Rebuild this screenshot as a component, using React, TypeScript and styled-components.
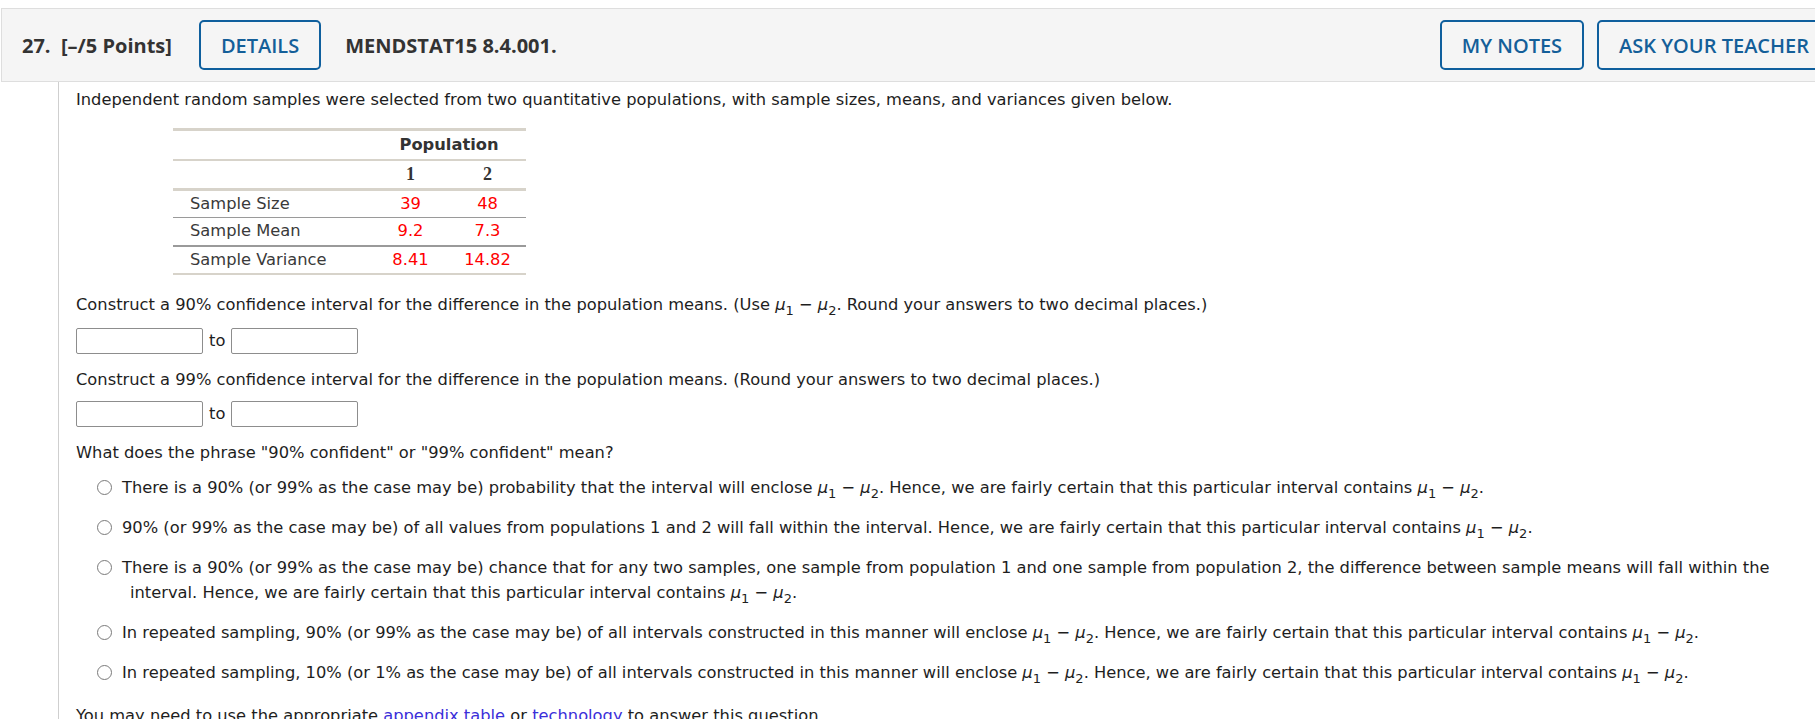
import React from 'react'
import styled, { createGlobalStyle } from 'styled-components'

const GlobalStyle = createGlobalStyle`
  html, body {
    margin: 0;
    padding: 0;
    background: #fff;
    overflow: hidden;
  }
`

const Page = styled.div`
  padding: 8px 0 0 1px;
  width: 1814px;
`

const Header = styled.header`
  display: flex;
  align-items: center;
  width: 1819px;
  height: 72px;
  padding-left: 20px;
  background: #f5f5f5;
  border: 1px solid #dedede;
  border-right: none;
  font-family: 'Open Sans', sans-serif;
  color: #333;
`

const Title = styled.span`
  font-size: 20px;
  font-weight: 700;
  white-space: pre;
  margin-right: 27px;
`

const OutlineButton = styled.button`
  flex-shrink: 0;
  height: 50px;
  padding: 0 20px;
  border: 2px solid #0f5f9d;
  border-radius: 5px;
  background: transparent;
  color: #145f99;
  font-family: 'Open Sans', sans-serif;
  font-size: 20px;
  font-weight: 600;
  text-transform: uppercase;
  white-space: nowrap;
`

const Code = styled.span`
  font-size: 20px;
  font-weight: 700;
  margin-left: 24px;
`

const Actions = styled.div`
  display: flex;
  gap: 13px;
  margin-left: auto;
  padding-right: 10px;
`

const Body = styled.section`
  margin-left: 57px;
  border-left: 1px solid #cfcfcf;
  padding: 7px 0 40px 17px;
  font-family: 'DejaVu Sans', 'Liberation Sans', sans-serif;
  font-size: 16.3px;
  line-height: 22px;
  color: #1e1e1e;
`

const Para = styled.p<{ $top?: number }>`
  margin: ${(p) => p.$top ?? 0}px 0 0;
`

const DataTable = styled.table`
  margin: 17px 0 0 97px;
  border-collapse: collapse;
  color: #3a3a3a;
`

const Row = styled.tr<{ $line: string; $weight: number; $h?: number }>`
  height: ${(p) => p.$h ?? 28}px;
  border-bottom: ${(p) => p.$weight}px solid ${(p) => p.$line};
`

const HeadRow = styled.tr`
  height: 30px;
  border-top: 3px solid #d7d3ca;
  border-bottom: 2px solid #d7d3ca;
`

const LabelCell = styled.td`
  width: 182px;
  padding: 0 0 0 17px;
  text-align: left;
`

const ValueCell = styled.td`
  width: 75px;
  text-align: center;
  color: #ff0000;
`

const PopHead = styled.th`
  text-align: center;
  font-weight: 700;
  color: #333;
`

const NumHead = styled.th`
  text-align: center;
  font-family: 'Liberation Serif', serif;
  font-size: 18px;
  font-weight: 700;
  color: #333;
`

const AnswerRow = styled.div<{ $top: number }>`
  display: flex;
  align-items: center;
  gap: 6px;
  margin-top: ${(p) => p.$top}px;
`

const Blank = styled.input`
  box-sizing: border-box;
  width: 127px;
  height: 26px;
  margin: 0;
  border: 1px solid #8d8d8d;
  border-radius: 2px;
  background: #fff;
`

const Options = styled.div`
  display: flex;
  flex-direction: column;
  gap: 15px;
  margin-top: 11px;
`

const Option = styled.label`
  display: block;
  padding-left: 54px;
  text-indent: -33px;
  line-height: 25px;
`

const Radio = styled.input`
  appearance: none;
  box-sizing: border-box;
  width: 15px;
  height: 15px;
  margin: 0 10px 0 0;
  border: 1px solid #7a7a7a;
  border-radius: 50%;
  background: #fff;
  vertical-align: -2px;
`

const Mu = styled.span`
  font-style: italic;
  white-space: nowrap;
  text-indent: 0;
`

const Sub = styled.sub`
  font-size: 13px;
  font-style: normal;
  line-height: 0;
  vertical-align: -5px;
`

const Link = styled.a`
  color: #3b2fd9;
  text-decoration: none;
`

const MuDiff = () => (
  <>
    <Mu>
      μ<Sub>1</Sub>
    </Mu>
    {' − '}
    <Mu>
      μ<Sub>2</Sub>
    </Mu>
  </>
)

const rows = [
  { label: 'Sample Size', a: '39', b: '48', line: '#9a9a9a', weight: 1 },
  { label: 'Sample Mean', a: '9.2', b: '7.3', line: '#9a9a9a', weight: 2 },
  { label: 'Sample Variance', a: '8.41', b: '14.82', line: '#d7d3ca', weight: 2 },
]

export default function App() {
  return (
    <Page>
      <GlobalStyle />
      <Header>
        <Title>{'27.  [–/5 Points]'}</Title>
        <OutlineButton>Details</OutlineButton>
        <Code>MENDSTAT15 8.4.001.</Code>
        <Actions>
          <OutlineButton>My Notes</OutlineButton>
          <OutlineButton>Ask Your Teacher</OutlineButton>
        </Actions>
      </Header>
      <Body>
        <Para>
          Independent random samples were selected from two quantitative populations, with sample sizes,
          means, and variances given below.
        </Para>
        <DataTable>
          <thead>
            <HeadRow>
              <th />
              <PopHead colSpan={2}>Population</PopHead>
            </HeadRow>
            <Row $line="#d7d3ca" $weight={3} $h={30}>
              <th />
              <NumHead>1</NumHead>
              <NumHead>2</NumHead>
            </Row>
          </thead>
          <tbody>
            {rows.map((r) => (
              <Row key={r.label} $line={r.line} $weight={r.weight}>
                <LabelCell>{r.label}</LabelCell>
                <ValueCell>{r.a}</ValueCell>
                <ValueCell>{r.b}</ValueCell>
              </Row>
            ))}
          </tbody>
        </DataTable>
        <Para $top={19}>
          Construct a 90% confidence interval for the difference in the population means. (Use <MuDiff />.
          Round your answers to two decimal places.)
        </Para>
        <AnswerRow $top={12}>
          <Blank />
          <span>to</span>
          <Blank />
        </AnswerRow>
        <Para $top={15}>
          Construct a 99% confidence interval for the difference in the population means. (Round your
          answers to two decimal places.)
        </Para>
        <AnswerRow $top={10}>
          <Blank />
          <span>to</span>
          <Blank />
        </AnswerRow>
        <Para $top={15}>What does the phrase "90% confident" or "99% confident" mean?</Para>
        <Options>
          <Option>
            <Radio type="radio" name="q27" />
            There is a 90% (or 99% as the case may be) probability that the interval will enclose{' '}
            <MuDiff />. Hence, we are fairly certain that this particular interval contains <MuDiff />.
          </Option>
          <Option>
            <Radio type="radio" name="q27" />
            90% (or 99% as the case may be) of all values from populations 1 and 2 will fall within the
            interval. Hence, we are fairly certain that this particular interval contains <MuDiff />.
          </Option>
          <Option>
            <Radio type="radio" name="q27" />
            There is a 90% (or 99% as the case may be) chance that for any two samples, one sample from
            population 1 and one sample from population 2, the difference between sample means will fall
            within the
            <br />
            interval. Hence, we are fairly certain that this particular interval contains <MuDiff />.
          </Option>
          <Option>
            <Radio type="radio" name="q27" />
            In repeated sampling, 90% (or 99% as the case may be) of all intervals constructed in this
            manner will enclose <MuDiff />. Hence, we are fairly certain that this particular interval
            contains <MuDiff />.
          </Option>
          <Option>
            <Radio type="radio" name="q27" />
            In repeated sampling, 10% (or 1% as the case may be) of all intervals constructed in this
            manner will enclose <MuDiff />. Hence, we are fairly certain that this particular interval
            contains <MuDiff />.
          </Option>
        </Options>
        <Para $top={20}>
          You may need to use the appropriate <Link href="#">appendix table</Link> or{' '}
          <Link href="#">technology</Link> to answer this question.
        </Para>
      </Body>
    </Page>
  )
}
